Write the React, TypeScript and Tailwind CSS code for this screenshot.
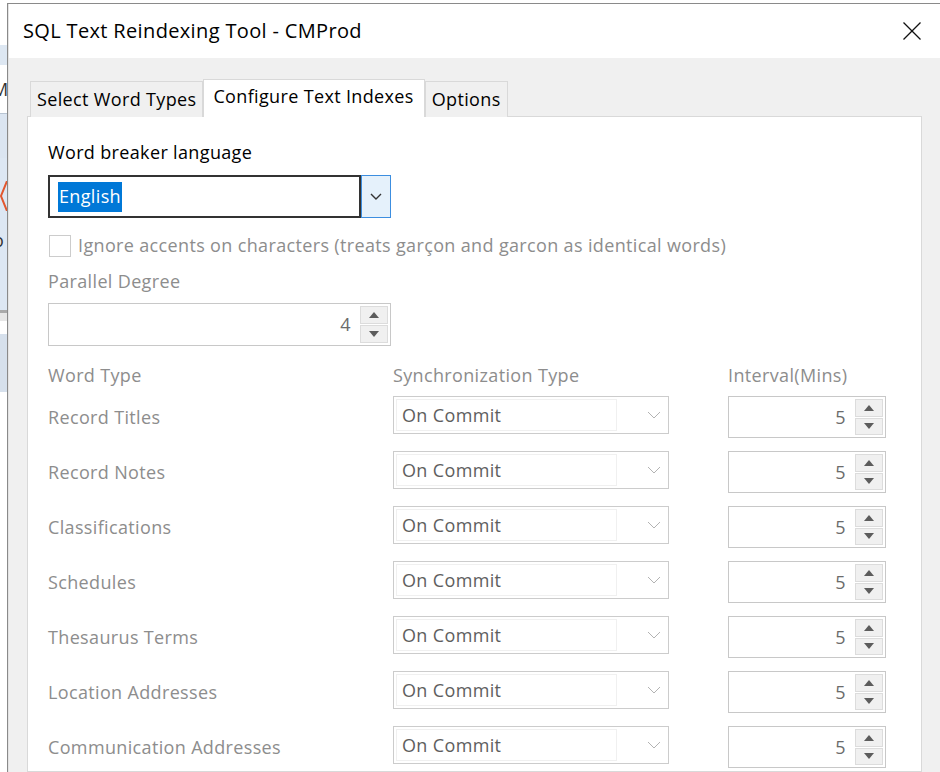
import React from "react";

const rows = [
  "Record Titles",
  "Record Notes",
  "Classifications",
  "Schedules",
  "Thesaurus Terms",
  "Location Addresses",
  "Communication Addresses",
];

function Spinner() {
  return (
    <div className="flex flex-col w-[28px] self-stretch my-[2px] mr-[2px] gap-px">
      <div className="flex-1 flex items-center justify-center bg-[#f0f0f0] border border-[#dcdcdc]">
        <svg width="10" height="6" viewBox="0 0 10 6">
          <polygon points="0,6 10,6 5,0" fill="#5c5c5c" />
        </svg>
      </div>
      <div className="flex-1 flex items-center justify-center bg-[#f0f0f0] border border-[#dcdcdc]">
        <svg width="10" height="6" viewBox="0 0 10 6">
          <polygon points="0,0 10,0 5,6" fill="#5c5c5c" />
        </svg>
      </div>
    </div>
  );
}

function NumberBox({ value, className }: { value: string; className: string }) {
  return (
    <div className={`flex items-stretch bg-white border border-[#c8c8c8] ${className}`}>
      <div className="flex-1 flex items-center justify-end pr-[9px] text-[18px] text-[#6b6b6b]">
        {value}
      </div>
      <Spinner />
    </div>
  );
}

function SyncCombo() {
  return (
    <div className="flex items-stretch w-[276px] h-[38px] bg-white border border-[#cccccc]">
      <div className="flex-1 flex items-center m-[2px] pl-[5px] border border-[#f0f0f0] text-[18px] tracking-[0.35px] text-[#5e5e5e]">
        On Commit
      </div>
      <div className="w-[49px] flex items-center justify-end pr-[7px]">
        <svg width="14" height="8" viewBox="0 0 14 8">
          <polyline points="1,1 7,7 13,1" fill="none" stroke="#b3b3b3" strokeWidth="1" />
        </svg>
      </div>
    </div>
  );
}

function BackgroundStrip() {
  return (
    <div className="w-[7px] shrink-0 flex flex-col overflow-hidden text-[18px] leading-none">
      <div className="h-[45px] bg-white" />
      <div className="h-[20px] bg-[#dde7f2]" />
      <div className="h-[48px] bg-white flex items-center text-[#333]">
        <span className="-ml-[8px]">M</span>
      </div>
      <div className="h-px bg-[#b8c4d2]" />
      <div className="h-[44px] bg-[#dbe5f1]" />
      <div className="h-[152px] bg-[#dde7f3] flex flex-col">
        <div className="h-[23px]" />
        <svg width="7" height="30" viewBox="0 0 7 30">
          <polyline points="7,0 1,15 7,30" fill="none" stroke="#e2572f" strokeWidth="2" />
        </svg>
        <div className="h-[20px]" />
        <span className="-ml-[7px] text-[#333]">o</span>
      </div>
      <div className="h-[3px] bg-[#a9a9a9]" />
      <div className="h-[8px] bg-[#e6e6e6]" />
      <div className="h-[13px] bg-white" />
      <div className="h-[58px] bg-[#d6e0ec]" />
      <div className="flex-1 bg-white" />
    </div>
  );
}

export default function App() {
  return (
    <div className="w-[940px] h-[772px] overflow-hidden flex bg-white font-['Open_Sans',sans-serif]">
      <BackgroundStrip />
      <div className="flex-1 flex flex-col mt-[3px] border-t border-l border-[#8a8a8a]">
        <div className="h-[54px] shrink-0 bg-white flex items-center justify-between pl-[14px] pr-[19px] border-l border-[#e4e4e4]">
          <span className="text-[20px] tracking-[0.35px] text-black">SQL Text Reindexing Tool - CMProd</span>
          <svg width="18" height="18" viewBox="0 0 18 18">
            <line x1="0.5" y1="0.5" x2="17.5" y2="17.5" stroke="#111" strokeWidth="1.2" />
            <line x1="17.5" y1="0.5" x2="0.5" y2="17.5" stroke="#111" strokeWidth="1.2" />
          </svg>
        </div>
        <div className="flex-1 flex flex-col bg-[#f0f0f0] pl-[18px] pt-[21px] pr-[18px] border-l border-[#e4e4e4] tracking-[0.35px]">
          {/* tabs */}
          <div className="flex items-start pl-[3px] h-[38px] relative z-10 -mb-px">
            <div className="mt-[2px] h-[36px] px-[6px] flex items-center bg-[#f0f0f0] border border-b-0 border-[#d9d9d9] text-[18px] text-black">
              Select Word Types
            </div>
            <div className="h-[38px] pl-[9px] pr-[10px] pb-[4px] flex items-center bg-white border border-b-0 border-[#d9d9d9] text-[18px] text-black">
              Configure Text Indexes
            </div>
            <div className="mt-[2px] h-[36px] px-[6px] flex items-center bg-[#f0f0f0] border border-b-0 border-[#d9d9d9] text-[18px] text-black">
              Options
            </div>
          </div>
          {/* panel */}
          <div className="flex-1 bg-white border border-[#d9d9d9] pl-[20px] pt-[21px]">
            <div className="h-[28px] flex items-center text-[18px] text-black">Word breaker language</div>
            <div className="mt-[9px] flex h-[43px] w-[343px]">
              <div className="flex-1 flex items-center border-2 border-[#333] pl-[8px]">
                <span className="bg-[#0078d7] text-white text-[18px] h-[30px] flex items-center px-[1px]">English</span>
              </div>
              <div className="w-[30px] flex items-center justify-center bg-[#e5f1fb] border border-[#3c8ee0]">
                <svg width="12" height="7" viewBox="0 0 12 7">
                  <polyline points="1,1 6,6 11,1" fill="none" stroke="#333" strokeWidth="1.4" />
                </svg>
              </div>
            </div>
            <div className="mt-[16px] flex items-center h-[23px] gap-[7px]">
              <div className="w-[22px] h-[22px] ml-px border border-[#cccccc] bg-white" />
              <span className="text-[18px] text-[#8d8d8d]">
                Ignore accents on characters (treats garçon and garcon as identical words)
              </span>
            </div>
            <div className="mt-[12px] h-[24px] flex items-center text-[18px] text-[#8d8d8d]">Parallel Degree</div>
            <NumberBox value="4" className="mt-[10px] w-[343px] h-[43px]" />
            <div className="mt-[17px] grid grid-cols-[345px_335px_158px] text-[18px] text-[#8d8d8d]">
              <div className="h-[24px] flex items-center">Word Type</div>
              <div className="h-[24px] flex items-center">Synchronization Type</div>
              <div className="h-[24px] flex items-center">Interval(Mins)</div>
            </div>
            <div className="mt-[9px] flex flex-col gap-[13px]">
              {rows.map((r) => (
                <div key={r} className="grid grid-cols-[345px_335px_158px] items-start h-[42px]">
                  <div className="h-[42px] flex items-center text-[18px] text-[#8d8d8d]">{r}</div>
                  <SyncCombo />
                  <NumberBox value="5" className="h-[42px]" />
                </div>
              ))}
            </div>
          </div>
        </div>
      </div>
    </div>
  );
}
